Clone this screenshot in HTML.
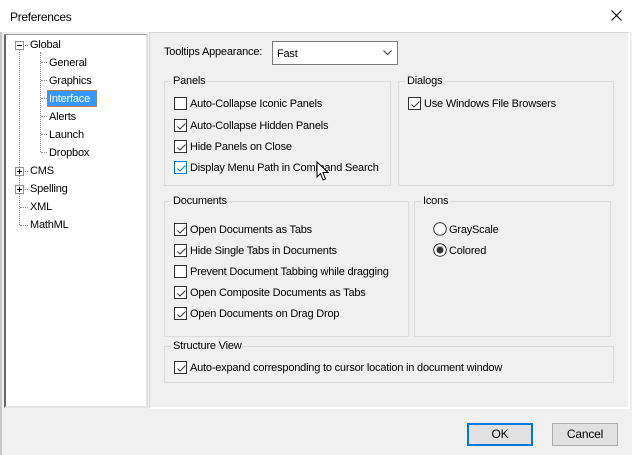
<!DOCTYPE html>
<html><head><meta charset="utf-8"><style>
*{margin:0;padding:0;box-sizing:border-box}
body{width:632px;height:455px;background:#f0f0f0;font-family:"Liberation Sans",sans-serif;font-size:11px;letter-spacing:-0.2px;line-height:16px;color:#000;position:relative;overflow:hidden}
.a{position:absolute;white-space:nowrap}
.title{left:0;top:0;width:632px;height:32px;background:#fff}
.tree{left:4px;top:34px;width:144px;height:374px;background:#fff;border-top:1px solid #a0a0a0;border-left:2px solid #696969;border-right:2px solid #e3e3e3;border-bottom:2px solid #e3e3e3}
.rp{left:149px;top:32px;width:481px;height:377px;border-right:2px solid #fff;border-bottom:2px solid #fff;border-left:1px solid #d8d8d8;border-top:1px solid #d8d8d8}
.grp{position:absolute;border:1px solid #dcdcdc}
.gl{position:absolute;background:#f0f0f0;padding:0 2px;top:-8px;left:6px;line-height:15px}
.cb{position:absolute;width:13px;height:13px;border:1px solid #333;background:#fff}
.cb svg{position:absolute;left:1px;top:1px}
.cb.blue{border-color:#0078d7}
.dl{position:absolute;border-left:1px dotted #888}
.dh{position:absolute;border-top:1px dotted #888}
.ex{position:absolute;width:9px;height:9px;border:1px solid #919191;background:#fff}
.btn{position:absolute;height:23px;background:#e1e1e1;border:1px solid #adadad;text-align:center;line-height:21px;font-size:12px}
</style></head><body>
<div class="a title"></div>
<div class="a" style="left:10px;top:9px;font-size:12px;letter-spacing:-0.3px">Preferences</div>
<svg class="a" style="left:611px;top:10px" width="11" height="11"><path d="M0.5 0.5L10.5 10.5M10.5 0.5L0.5 10.5" stroke="#000" stroke-width="1.1"/></svg>
<div class="a" style="left:0;top:32px;width:2px;height:423px;background:#c8c8c8"></div>

<div class="a tree"></div>
<div class="dl" style="left:19px;top:50px;height:175px"></div>
<div class="dl" style="left:40px;top:52px;height:100px"></div>
<div class="ex" style="left:15px;top:41px"><div style="position:absolute;left:1px;top:3px;width:5px;height:1px;background:#000"></div></div>
<div class="dh" style="left:25px;top:45px;width:3px"></div>
<div class="dh" style="left:41px;top:62px;width:6px"></div>
<div class="dh" style="left:41px;top:80px;width:6px"></div>
<div class="dh" style="left:41px;top:98px;width:6px"></div>
<div class="dh" style="left:41px;top:116px;width:6px"></div>
<div class="dh" style="left:41px;top:134px;width:6px"></div>
<div class="dh" style="left:41px;top:152px;width:6px"></div>
<div class="ex" style="left:15px;top:167px"><div style="position:absolute;left:1px;top:3px;width:5px;height:1px;background:#000"></div><div style="position:absolute;left:3px;top:1px;width:1px;height:5px;background:#000"></div></div>
<div class="dh" style="left:25px;top:171px;width:3px"></div>
<div class="ex" style="left:15px;top:185px"><div style="position:absolute;left:1px;top:3px;width:5px;height:1px;background:#000"></div><div style="position:absolute;left:3px;top:1px;width:1px;height:5px;background:#000"></div></div>
<div class="dh" style="left:25px;top:189px;width:3px"></div>
<div class="dh" style="left:20px;top:207px;width:8px"></div>
<div class="dh" style="left:20px;top:225px;width:8px"></div>
<div class="a" style="left:30px;top:37px">Global</div>
<div class="a" style="left:49px;top:55px">General</div>
<div class="a" style="left:49px;top:73px">Graphics</div>
<div class="a" style="left:47px;top:90px;width:50px;height:17px;background:#3399ff;border:1px dotted #c08040"></div>
<div class="a" style="left:49px;top:91px;color:#fff">Interface</div>
<div class="a" style="left:49px;top:109px">Alerts</div>
<div class="a" style="left:49px;top:127px">Launch</div>
<div class="a" style="left:49px;top:145px">Dropbox</div>
<div class="a" style="left:30px;top:163px">CMS</div>
<div class="a" style="left:30px;top:181px">Spelling</div>
<div class="a" style="left:30px;top:199px">XML</div>
<div class="a" style="left:30px;top:217px">MathML</div>

<div class="a rp"></div>
<div class="a" style="left:164px;top:44px">Tooltips Appearance:</div>
<div class="a" style="left:272px;top:41px;width:126px;height:24px;background:#fff;border:1px solid #7a7a7a"></div>
<div class="a" style="left:277px;top:46px">Fast</div>
<svg class="a" style="left:383px;top:50px" width="9" height="6"><path d="M0.5 0.5L4.5 4.5L8.5 0.5" stroke="#333" fill="none"/></svg>

<div class="grp" style="left:164px;top:81px;width:227px;height:105px"><div class="gl">Panels</div></div>
<div class="grp" style="left:398px;top:81px;width:216px;height:105px"><div class="gl">Dialogs</div></div>
<div class="grp" style="left:164px;top:201px;width:245px;height:136px"><div class="gl">Documents</div></div>
<div class="grp" style="left:414px;top:201px;width:197px;height:136px"><div class="gl">Icons</div></div>
<div class="grp" style="left:164px;top:346px;width:450px;height:37px"><div class="gl">Structure View</div></div>

<div class="cb" style="left:174px;top:97px"></div>
<div class="a" style="left:190px;top:96px">Auto-Collapse Iconic Panels</div>
<div class="cb" style="left:174px;top:119px"><svg width="11" height="11"><path d="M1.5 5.5L4 8L9.5 2.5" stroke="#333" fill="none"/></svg></div>
<div class="a" style="left:190px;top:118px">Auto-Collapse Hidden Panels</div>
<div class="cb" style="left:174px;top:140px"><svg width="11" height="11"><path d="M1.5 5.5L4 8L9.5 2.5" stroke="#333" fill="none"/></svg></div>
<div class="a" style="left:190px;top:139px">Hide Panels on Close</div>
<div class="cb blue" style="left:174px;top:161px"><svg width="11" height="11"><path d="M1.5 5.5L4 8L9.5 2.5" stroke="#0078d7" fill="none"/></svg></div>
<div class="a" style="left:190px;top:160px">Display Menu Path in Command Search</div>
<svg class="a" style="left:316px;top:161px" width="14" height="21"><path d="M1 1L1 16L4.5 12.5L7 19L9.5 18L7 11.5L12 11.5Z" fill="#fff" stroke="#000"/></svg>

<div class="cb" style="left:408px;top:97px"><svg width="11" height="11"><path d="M1.5 5.5L4 8L9.5 2.5" stroke="#333" fill="none"/></svg></div>
<div class="a" style="left:424px;top:96px">Use Windows File Browsers</div>

<div class="cb" style="left:174px;top:223px"><svg width="11" height="11"><path d="M1.5 5.5L4 8L9.5 2.5" stroke="#333" fill="none"/></svg></div>
<div class="a" style="left:190px;top:222px">Open Documents as Tabs</div>
<div class="cb" style="left:174px;top:244px"><svg width="11" height="11"><path d="M1.5 5.5L4 8L9.5 2.5" stroke="#333" fill="none"/></svg></div>
<div class="a" style="left:190px;top:243px">Hide Single Tabs in Documents</div>
<div class="cb" style="left:174px;top:265px"></div>
<div class="a" style="left:190px;top:264px">Prevent Document Tabbing while dragging</div>
<div class="cb" style="left:174px;top:286px"><svg width="11" height="11"><path d="M1.5 5.5L4 8L9.5 2.5" stroke="#333" fill="none"/></svg></div>
<div class="a" style="left:190px;top:285px">Open Composite Documents as Tabs</div>
<div class="cb" style="left:174px;top:307px"><svg width="11" height="11"><path d="M1.5 5.5L4 8L9.5 2.5" stroke="#333" fill="none"/></svg></div>
<div class="a" style="left:190px;top:306px">Open Documents on Drag Drop</div>

<svg class="a" style="left:433px;top:222px" width="14" height="14"><circle cx="7" cy="7" r="6.3" fill="#fff" stroke="#333"/></svg>
<div class="a" style="left:449px;top:222px">GrayScale</div>
<svg class="a" style="left:433px;top:243px" width="14" height="14"><circle cx="7" cy="7" r="6.3" fill="#fff" stroke="#333"/><circle cx="7" cy="7" r="3.5" fill="#333"/></svg>
<div class="a" style="left:449px;top:243px">Colored</div>

<div class="cb" style="left:174px;top:361px"><svg width="11" height="11"><path d="M1.5 5.5L4 8L9.5 2.5" stroke="#333" fill="none"/></svg></div>
<div class="a" style="left:190px;top:360px">Auto-expand corresponding to cursor location in document window</div>

<div class="btn" style="left:467px;top:423px;width:66px;border:2px solid #0078d7;line-height:19px">OK</div>
<div class="btn" style="left:552px;top:423px;width:66px">Cancel</div>
</body></html>
